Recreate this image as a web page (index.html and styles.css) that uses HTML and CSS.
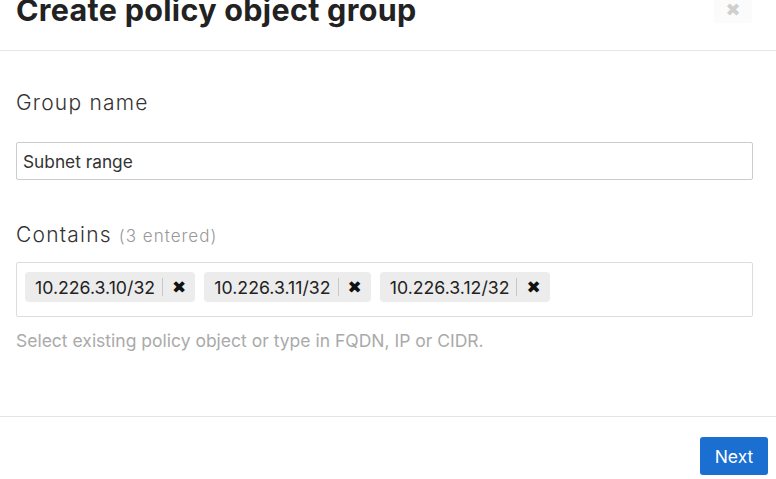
FILE: index.html
```html
<!DOCTYPE html>
<html>
<head>
<meta charset="utf-8">
<link rel="stylesheet" href="styles.css">
</head>
<body>
<div class="modal">
  <header class="modal-header">
    <h1 class="modal-title">Create policy object group</h1>
    <button class="close-btn" aria-label="Close">&#x2716;</button>
  </header>
  <main class="modal-body">
    <div class="field">
      <label class="field-label">Group name</label>
      <div class="text-input">Subnet range</div>
    </div>
    <div class="field field-contains">
      <label class="field-label">Contains <span class="count">(3 entered)</span></label>
      <div class="tag-input">
        <span class="tag"><span class="tag-text">10.226.3.10/32</span><span class="tag-sep"></span><span class="tag-x">&#x2716;</span></span>
        <span class="tag"><span class="tag-text">10.226.3.11/32</span><span class="tag-sep"></span><span class="tag-x">&#x2716;</span></span>
        <span class="tag"><span class="tag-text">10.226.3.12/32</span><span class="tag-sep"></span><span class="tag-x">&#x2716;</span></span>
      </div>
      <p class="help">Select existing policy object or type in FQDN, IP or CIDR.</p>
    </div>
  </main>
  <footer class="modal-footer">
    <button class="btn-primary">Next</button>
  </footer>
</div>
</body>
</html>
```
FILE: styles.css
```css
* { box-sizing: border-box; }
html, body { margin: 0; padding: 0; background: #fff; }
body { font-family: Inter, "Noto Sans", sans-serif; color: #333; width: 776px; height: 479px; overflow: hidden; }
.modal { display: flex; flex-direction: column; height: 479px; }
.modal-header {
  height: 51px;
  border-bottom: 1px solid #e5e5e5;
  display: flex;
  justify-content: space-between;
  align-items: flex-start;
  padding: 0 24px 0 16px;
}
.modal-title {
  margin: -6px 0 0;
  font-size: 30.5px;
  line-height: 32px;
  font-weight: 700;
  color: #222;
  letter-spacing: 0.3px;
  white-space: nowrap;
}
.close-btn {
  margin-top: -14px;
  width: 38px;
  height: 37px;
  border: none;
  background: #fbfbfb;
  color: #cfcfcf;
  font-size: 18px;
  line-height: 18px;
  padding: 10px 0 0;
  font-family: "DejaVu Sans", sans-serif;
  border-radius: 3px;
}
.modal-body { flex: 1; padding: 40px 23px 0 16px; }
.field-label {
  display: block;
  font-size: 21px;
  font-weight: 300;
  color: #333;
  line-height: 24px;
  margin-bottom: 27px;
  letter-spacing: 1.2px;
}
.count { font-size: 17px; color: #999; letter-spacing: 1px; }
.text-input {
  height: 38px;
  border: 1px solid #ccc;
  border-radius: 2px;
  padding: 0 6px;
  display: flex;
  align-items: center;
  font-size: 17.3px;
  color: #333;
}
.field-contains { margin-top: 43px; }
.field-contains .field-label { margin-bottom: 14px; }
.tag-input {
  border: 1px solid #ddd;
  border-radius: 2px;
  height: 55px;
  padding: 9px 8px;
  display: flex;
  gap: 9px;
}
.tag {
  height: 30px;
  background: #ececec;
  border-radius: 4px;
  display: flex;
  align-items: center;
  padding: 0 9px 0 10px;
  font-size: 17.7px;
  color: #222;
}
.tag-sep {
  width: 1px;
  height: 18px;
  background: #c8c8c8;
  margin: 0 9px 0 7px;
}
.tag-x {
  font-family: "DejaVu Sans", sans-serif;
  font-size: 17px;
  color: #111;
}
.help {
  margin: 13px 0 0;
  font-size: 17.5px;
  color: #aaa;
}
.modal-footer {
  height: 63px;
  border-top: 1px solid #e5e5e5;
  display: flex;
  justify-content: flex-end;
  align-items: flex-start;
  padding: 20px 8px 0 0;
}
.btn-primary {
  width: 68px;
  height: 38px;
  border: none;
  border-radius: 3px;
  background: #1a6fd1;
  color: #fff;
  font-family: Inter, "Noto Sans", sans-serif;
  font-size: 17.5px;
}
```
